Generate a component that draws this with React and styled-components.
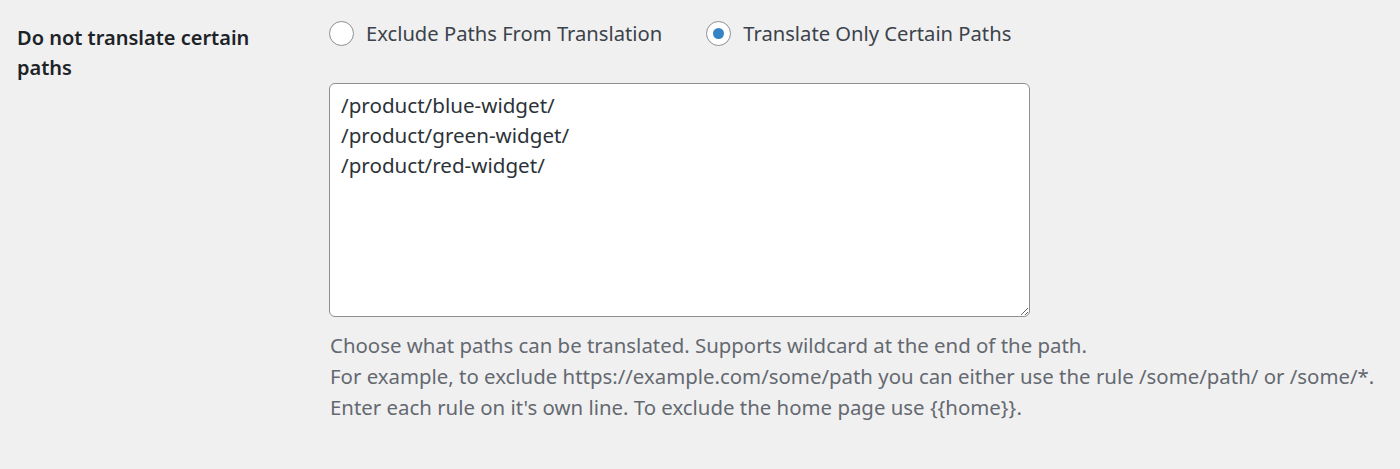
import React, { useState } from 'react';
import styled, { createGlobalStyle } from 'styled-components';

const GlobalStyle = createGlobalStyle`
  html, body {
    margin: 0;
    padding: 0;
    background: #f0f0f1;
  }
  body {
    font-family: "Noto Sans", "Open Sans", sans-serif;
    color: #3c434a;
  }
`;

const FormRow = styled.div`
  display: grid;
  grid-template-columns: 312px 1fr;
  padding: 18px 0 0 17px;
`;

const Label = styled.div`
  font-size: 20px;
  font-weight: 600;
  line-height: 30px;
  color: #1d2327;
  padding-top: 5px;
  width: 270px;
`;

const Field = styled.div`
  display: flex;
  flex-direction: column;
`;

const RadioGroup = styled.div`
  display: flex;
  gap: 44px;
  align-items: center;
  height: 30px;
`;

const RadioLabel = styled.label`
  display: flex;
  align-items: center;
  gap: 12px;
  font-size: 20.2px;
  color: #3c434a;
  cursor: pointer;
`;

const RadioCircle = styled.span`
  box-sizing: border-box;
  width: 25px;
  height: 25px;
  border-radius: 50%;
  border: 1px solid #8c8f94;
  background: #fff;
  display: flex;
  align-items: center;
  justify-content: center;

  &::after {
    content: '';
    width: 11px;
    height: 11px;
    border-radius: 50%;
    background: ${p => (p.checked ? '#3582c4' : 'transparent')};
  }
`;

const TextArea = styled.textarea`
  box-sizing: border-box;
  margin-top: 35px;
  width: 701px;
  height: 234px;
  border: 1px solid #8c8f94;
  border-radius: 6px;
  background: #fff;
  padding: 6px 11px;
  font-family: "Noto Sans", "Open Sans", sans-serif;
  font-size: 20.6px;
  line-height: 30px;
  color: #2c3338;
  outline: none;
`;

const Description = styled.p`
  margin: 13px 0 0 1px;
  font-size: 20.4px;
  line-height: 31px;
  color: #646970;
`;

const options = [
  { id: 'exclude', text: 'Exclude Paths From Translation' },
  { id: 'include', text: 'Translate Only Certain Paths' },
];

export default function App() {
  const [mode, setMode] = useState('include');
  const [paths, setPaths] = useState(
    '/product/blue-widget/\n/product/green-widget/\n/product/red-widget/'
  );

  return (
    <>
      <GlobalStyle />
      <FormRow>
        <Label>Do not translate certain paths</Label>
        <Field>
          <RadioGroup>
            {options.map(opt => (
              <RadioLabel key={opt.id} onClick={() => setMode(opt.id)}>
                <RadioCircle checked={mode === opt.id} />
                {opt.text}
              </RadioLabel>
            ))}
          </RadioGroup>
          <TextArea value={paths} onChange={e => setPaths(e.target.value)} />
          <Description>
            Choose what paths can be translated. Supports wildcard at the end of the path.
            <br />
            For example, to exclude https://example.com/some/path you can either use the rule /some/path/ or /some/*.
            <br />
            Enter each rule on it's own line. To exclude the home page use {'{{home}}'}.
          </Description>
        </Field>
      </FormRow>
    </>
  );
}
